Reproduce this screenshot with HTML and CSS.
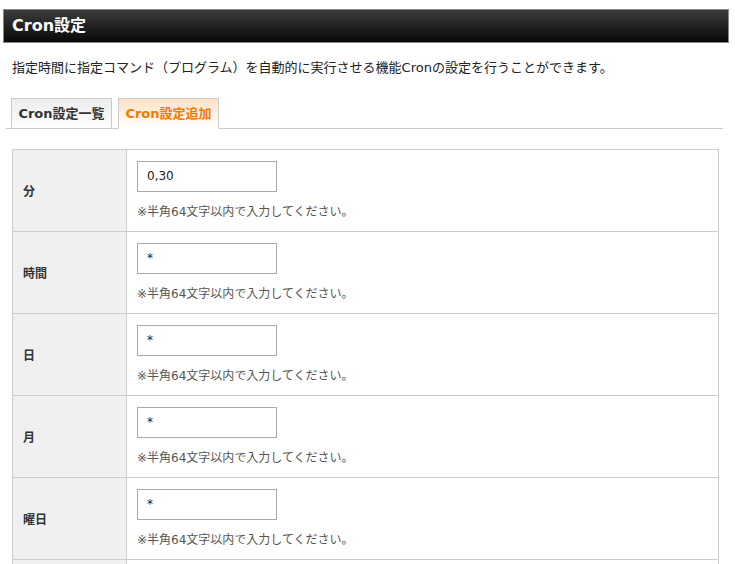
FILE: index.html
```html
<!DOCTYPE html>
<html lang="ja">
	<head>
		<meta charset="utf-8" />
		<title>Cron設定</title>
		<link rel="stylesheet" href="styles.css">
	</head>
	<body>
		<div class="page">
			<h1 class="page-title">Cron設定</h1>
			<p class="lead">指定時間に指定コマンド（プログラム）を自動的に実行させる機能Cronの設定を行うことができます。</p>
			<ul class="tabs">
				<li class="tab"><a href="#">Cron設定一覧</a></li>
				<li class="tab active"><a href="#">Cron設定追加</a></li>
			</ul>
			<table class="form-table">
				<tr>
					<th>分</th>
					<td>
						<input class="text" type="text" value="0,30" />
						<p class="note">※半角64文字以内で入力してください。</p>
					</td>
				</tr>
				<tr>
					<th>時間</th>
					<td>
						<input class="text" type="text" value="*" />
						<p class="note">※半角64文字以内で入力してください。</p>
					</td>
				</tr>
				<tr>
					<th>日</th>
					<td>
						<input class="text" type="text" value="*" />
						<p class="note">※半角64文字以内で入力してください。</p>
					</td>
				</tr>
				<tr>
					<th>月</th>
					<td>
						<input class="text" type="text" value="*" />
						<p class="note">※半角64文字以内で入力してください。</p>
					</td>
				</tr>
				<tr>
					<th>曜日</th>
					<td>
						<input class="text" type="text" value="*" />
						<p class="note">※半角64文字以内で入力してください。</p>
					</td>
				</tr>
				<tr>
					<th>コマンド</th>
					<td>
						<input class="text wide" type="text" value="" />
						<p class="note">※半角256文字以内で入力してください。</p>
					</td>
				</tr>
			</table>
		</div>
	</body>
</html>
```

FILE: styles.css
```css
body {
	margin: 0;
	background: #fff;
	color: #333;
	font-family: "DejaVu Sans", "Noto Sans CJK JP", sans-serif;
	font-size: 12px;
}

.page {
	padding: 9px 6px 0 3px;
}

.page-title {
	margin: 0;
	height: 34px;
	box-sizing: border-box;
	padding: 0 8px;
	line-height: 32px;
	font-size: 16px;
	color: #fff;
	background: linear-gradient(#3c3c3c, #080808);
	border: 1px solid #888;
}

.lead {
	margin: 16px 0 0 9px;
	font-size: 13px;
	line-height: 18px;
	color: #222;
}

.tabs {
	display: flex;
	gap: 6px;
	list-style: none;
	margin: 21px 6px 0 3px;
	padding: 0 0 0 5px;
	border-bottom: 1px solid #ccc;
}

.tab a {
	display: block;
	width: 101px;
	box-sizing: border-box;
	height: 31px;
	margin-bottom: -1px;
	line-height: 30px;
	text-align: center;
	font-size: 13px;
	font-weight: bold;
	text-decoration: none;
	color: #333;
	background: linear-gradient(#ececec, #fff);
	border: 1px solid #ccc;
}

.tab.active a {
	color: #f27a00;
	background: linear-gradient(#ffe2c4, #fff);
	border-bottom-color: #fff;
}

.form-table {
	margin: 20px 0 0 9px;
	width: 707px;
	border-collapse: collapse;
}

.form-table th,
.form-table td {
	border: 1px solid #ccc;
}

.form-table th {
	width: 93px;
	padding: 0 10px;
	text-align: left;
	font-size: 12px;
	background: #f0f0f0;
	color: #333;
}

.form-table td {
	padding: 10px;
	height: 61px;
}

.text {
	display: block;
	width: 140px;
	height: 31px;
	box-sizing: border-box;
	padding: 0 9px;
	border: 1px solid #aaa;
	font-family: inherit;
	font-size: 12px;
	color: #222;
}

.text.wide {
	width: 420px;
}

.note {
	margin: 11px 0 0;
	line-height: 18px;
	color: #555;
}
```
